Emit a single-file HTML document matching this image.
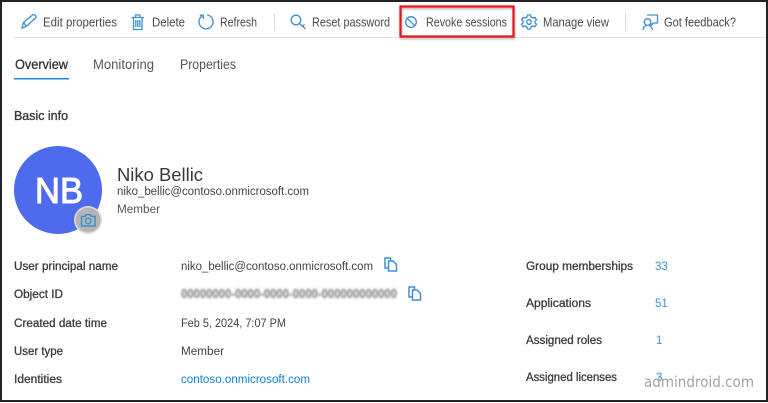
<!DOCTYPE html>
<html><head><meta charset="utf-8"><style>
html,body{margin:0;padding:0;background:#fff;width:768px;height:403px;overflow:hidden}
svg{display:block;position:absolute;left:0;top:0}
text{font-family:"Liberation Sans",sans-serif;fill:#444;font-size:12px}
.c{filter:blur(.35px)}
.t{fill:#4a4a4a;font-size:12.5px}
.l{fill:#3c3c3c;font-size:11.5px;stroke:#3c3c3c;stroke-width:.3px}
.b{fill:#0f7fd0}
.i{fill:none;stroke:#3d8fd6;stroke-width:1.3}
</style></head><body>
<svg width="768" height="403" viewBox="0 0 768 403">
<defs>
<filter id="bl" x="-5%" y="-60%" width="110%" height="220%"><feGaussianBlur stdDeviation="1.1"/></filter>
<filter id="sh" x="-5%" y="-20%" width="110%" height="150%"><feGaussianBlur stdDeviation="1.2"/></filter>
</defs>
<rect width="768" height="403" fill="#fff"/>
<g class="c">
<line x1="14" y1="37.5" x2="766" y2="37.5" stroke="#e4e4e4"/>
<line x1="274.5" y1="13" x2="274.5" y2="31" stroke="#dcdcdc"/>
<line x1="625.5" y1="13" x2="625.5" y2="31" stroke="#dcdcdc"/>

<!-- pencil -->
<path class="i" d="M22 28 L23.5 22.5 L32.5 15 Q34 14 35.500 15.500 Q36.500 17 35.500 18 L26.5 26.300 Z M23.500 22.500 L26.500 26.300"/>
<text class="t" x="43" y="26.500" textLength="74" lengthAdjust="spacingAndGlyphs">Edit properties</text>
<!-- trash -->
<path class="i" d="M131.500 17.500 H144 M133.500 17.500 V29.500 H142 V17.500 M135.500 17.500 V15 H140 V17.500 M135.800 20 V27 M137.800 20 V27 M139.800 20 V27"/>
<text class="t" x="152" y="26.500" textLength="33" lengthAdjust="spacingAndGlyphs">Delete</text>
<!-- refresh -->
<path class="i" d="M202.500 15.800 A7 7 0 1 0 207 14.900"/>
<path class="i" d="M199.800 15.200 L203.300 15.200 L203.300 19"/>
<text class="t" x="220" y="26.500" textLength="37" lengthAdjust="spacingAndGlyphs">Refresh</text>
<!-- key -->
<circle class="i" cx="296" cy="20" r="4.800"/>
<path class="i" d="M299.500 23.500 L305.500 29 M302.500 26.500 L304.500 24.500"/>
<text class="t" x="312" y="26.500" textLength="78" lengthAdjust="spacingAndGlyphs">Reset password</text>
<!-- red box -->
<rect x="401" y="8" width="113" height="30" fill="none" stroke="#777" stroke-width="2" filter="url(#sh)" opacity=".7"/>
<rect x="400.500" y="6.500" width="113" height="30" fill="none" stroke="#e8141c" stroke-width="2.200"/>
<!-- revoke -->
<circle class="i" cx="411" cy="22" r="5.300"/>
<path class="i" d="M407.300 18.300 L414.700 25.700"/>
<text class="t" x="426" y="26.500" textLength="81" lengthAdjust="spacingAndGlyphs">Revoke sessions</text>
<!-- gear -->
<circle class="i" cx="529" cy="22" r="2.300"/>
<path class="i" d="M527.500 15 H530.500 L531 17 L533 18 L535 17.300 L536.500 19.800 L535 21.200 V22.800 L536.500 24.200 L535 26.700 L533 26 L531 27 L530.500 29 H527.500 L527 27 L525 26 L523 26.700 L521.500 24.200 L523 22.800 V21.200 L521.500 19.800 L523 17.300 L525 18 L527 17 Z"/>
<text class="t" x="543" y="26.500" textLength="66" lengthAdjust="spacingAndGlyphs">Manage view</text>
<!-- feedback -->
<circle class="i" cx="647.500" cy="22" r="3.300"/>
<path class="i" d="M643 30 Q643.500 26 646.500 25.600 M649 25.600 Q652 26.500 652.500 30"/>
<path class="i" d="M647 15 H657.500 V23 H653.500 L651 25.500 V23"/>
<text class="t" x="664" y="26.500" textLength="72" lengthAdjust="spacingAndGlyphs">Got feedback?</text>

<!-- tabs -->
<text x="15" y="69" style="font-size:13.500px;fill:#333;stroke:#333;stroke-width:.3px" textLength="53" lengthAdjust="spacingAndGlyphs">Overview</text>
<rect x="14" y="78" width="55" height="1.500" fill="#1f86d8"/>
<text x="93" y="69" style="font-size:13.500px;fill:#555" textLength="61" lengthAdjust="spacingAndGlyphs">Monitoring</text>
<text x="180" y="69" style="font-size:13.500px;fill:#555" textLength="56" lengthAdjust="spacingAndGlyphs">Properties</text>

<text x="14" y="120" style="font-size:12.500px;fill:#3a3a3a;stroke:#3a3a3a;stroke-width:.35px" textLength="54" lengthAdjust="spacingAndGlyphs">Basic info</text>

<!-- avatar -->
<circle cx="58" cy="190" r="44" fill="#4f6bed"/>
<text x="35" y="203" style="font-size:36px;fill:#fff;stroke:#fff;stroke-width:1px" textLength="48" lengthAdjust="spacingAndGlyphs">NB</text>
<circle cx="88" cy="220" r="14" fill="#ddd"/>
<circle cx="88" cy="220" r="12.500" fill="#b5b5b5"/>
<path d="M81.500 216.500 H85 L86 214.800 H90.500 L91.500 216.500 H95 V226 H81.500 Z" fill="none" stroke="#3f8ecb" stroke-width="1.500"/>
<circle cx="88.200" cy="221" r="2.800" fill="none" stroke="#3f8ecb" stroke-width="1.300"/>

<text x="117" y="181" style="font-size:18px;fill:#3a3a3a" textLength="86" lengthAdjust="spacingAndGlyphs">Niko Bellic</text>
<text x="117" y="195" style="font-size:11.500px;fill:#444" textLength="192" lengthAdjust="spacingAndGlyphs">niko_bellic@contoso.onmicrosoft.com</text>
<text x="117" y="213" style="font-size:11.500px;fill:#555" textLength="43" lengthAdjust="spacingAndGlyphs">Member</text>

<!-- left labels -->
<text class="l" x="14" y="270" textLength="104" lengthAdjust="spacingAndGlyphs">User principal name</text>
<text class="l" x="14" y="298" textLength="49" lengthAdjust="spacingAndGlyphs">Object ID</text>
<text class="l" x="14" y="327" textLength="93" lengthAdjust="spacingAndGlyphs">Created date time</text>
<text class="l" x="14" y="355" textLength="49" lengthAdjust="spacingAndGlyphs">User type</text>
<text class="l" x="14" y="383" textLength="48" lengthAdjust="spacingAndGlyphs">Identities</text>

<!-- values -->
<text x="181" y="270" style="font-size:11.500px;fill:#444" textLength="192" lengthAdjust="spacingAndGlyphs">niko_bellic@contoso.onmicrosoft.com</text>
<text x="181" y="298" filter="url(#bl)" style="font-size:12.500px;font-weight:bold;fill:#777" textLength="216" lengthAdjust="spacingAndGlyphs">00000000-0000-0000-0000-000000000000</text>
<text x="181" y="327" style="font-size:11.500px;fill:#444" textLength="105" lengthAdjust="spacingAndGlyphs">Feb 5, 2024, 7:07 PM</text>
<text x="181" y="355" style="font-size:11.500px;fill:#444" textLength="43" lengthAdjust="spacingAndGlyphs">Member</text>
<text class="b" x="181" y="383" style="font-size:11.500px" textLength="129" lengthAdjust="spacingAndGlyphs">contoso.onmicrosoft.com</text>

<!-- copy icons -->
<path class="i" style="stroke-width:1.500" d="M388.500 268 H385 V258 H390.500 V261 M388.500 261 H393 L396.500 264.500 V271 H388.500 Z"/>
<path class="i" style="stroke-width:1.500" d="M412.500 297 H409 V287 H414.500 V290 M412.500 290 H417 L420.500 293.500 V300 H412.500 Z"/>

<!-- right -->
<text class="l" x="526" y="270" textLength="107" lengthAdjust="spacingAndGlyphs">Group memberships</text>
<text class="l" x="526" y="307" textLength="65" lengthAdjust="spacingAndGlyphs">Applications</text>
<text class="l" x="526" y="344" textLength="76" lengthAdjust="spacingAndGlyphs">Assigned roles</text>
<text class="l" x="526" y="381" textLength="91" lengthAdjust="spacingAndGlyphs">Assigned licenses</text>
<text class="b" x="655" y="270" style="font-size:11.500px;fill:#3a94dc">33</text>
<text class="b" x="655" y="307" style="font-size:11.500px;fill:#3a94dc">51</text>
<text class="b" x="656" y="344" style="font-size:11.500px;fill:#3a94dc">1</text>
<text class="b" x="656" y="381" style="font-size:11.500px;fill:#3a94dc">3</text>

<text x="644" y="387" style="font-size:15.500px;fill:#a0a4a8;font-family:'DejaVu Sans',sans-serif" textLength="110" lengthAdjust="spacingAndGlyphs">admindroid.com</text>
</g>
<!-- frame -->
<rect x="0" y="0" width="768" height="2" fill="#222"/>
<rect x="0" y="0" width="2" height="402" fill="#222"/>
<rect x="766" y="0" width="2" height="402" fill="#222"/>
<rect x="0" y="400" width="768" height="2" fill="#222"/>
</svg>
</body></html>
